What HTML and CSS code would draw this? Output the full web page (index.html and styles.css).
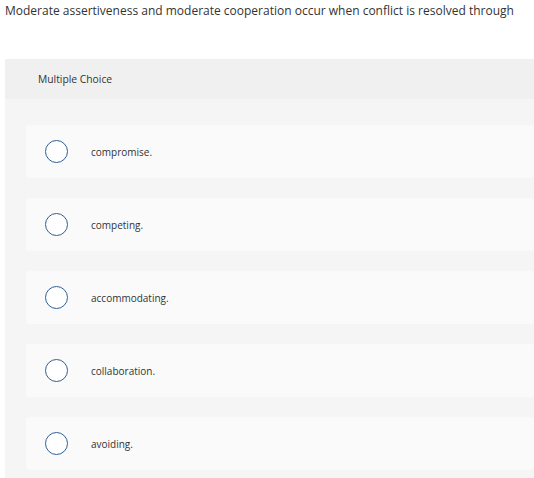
FILE: index.html
```html
<!DOCTYPE html>
<html>
<head>
<meta charset="utf-8">
<link rel="stylesheet" href="styles.css">
</head>
<body>
<p class="question">Moderate assertiveness and moderate cooperation occur when conflict is resolved through</p>
<div class="panel">
  <div class="panel-head">Multiple Choice</div>
  <div class="panel-body">
    <div class="option"><span class="radio"></span><span class="label">compromise.</span></div>
    <div class="option"><span class="radio"></span><span class="label">competing.</span></div>
    <div class="option"><span class="radio"></span><span class="label">accommodating.</span></div>
    <div class="option"><span class="radio"></span><span class="label">collaboration.</span></div>
    <div class="option"><span class="radio"></span><span class="label">avoiding.</span></div>
  </div>
</div>
</body>
</html>
```
FILE: styles.css
```css
html, body {
  margin: 0;
  padding: 0;
  background: #ffffff;
  overflow: hidden;
}
body {
  font-family: "Open Sans", "Liberation Sans", sans-serif;
  font-variant-ligatures: none;
  color: #333333;
  width: 534px;
  height: 478px;
}
.question {
  margin: 0;
  padding: 2px 0 0 5px;
  font-size: 12px;
  line-height: 17px;
  white-space: nowrap;
}
.panel {
  margin: 40px 0 0 5px;
}
.panel-head {
  background: #f0f0f0;
  height: 40px;
  padding-left: 33px;
  display: flex;
  align-items: center;
  font-size: 10.3px;
}
.panel-body {
  background: #f5f5f5;
  padding: 26px 0 8px 21px;
  display: flex;
  flex-direction: column;
  gap: 20px;
}
.option {
  background: #fafafa;
  border-radius: 3px;
  height: 53px;
  display: flex;
  align-items: center;
  padding-left: 19px;
}
.radio {
  width: 21px;
  height: 21px;
  border: 1.2px solid #2f5f92;
  border-radius: 50%;
  background: #ffffff;
  flex: none;
}
.label {
  margin-left: 23px;
  font-size: 10px;
}
```
